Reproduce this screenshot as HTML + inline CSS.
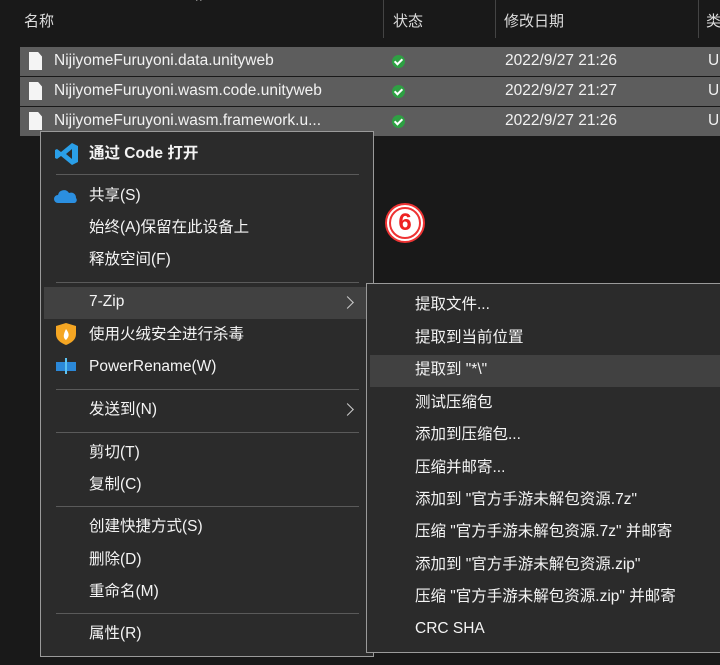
<!DOCTYPE html>
<html><head><meta charset="utf-8"><style>
*{margin:0;padding:0;box-sizing:border-box}
body{width:720px;height:665px;background:#191919;position:relative;overflow:hidden;font-family:"Liberation Sans","Noto Sans CJK SC",sans-serif;color:#fff;font-size:15px}
.a{position:absolute;white-space:nowrap}
.hd{color:#ddd;font-size:15px;top:10px}
.vs{position:absolute;top:0;width:1px;height:38px;background:#444}
.row{position:absolute;left:20px;width:700px;height:29px;background:#5d5d5d}
.row span{position:absolute;top:5px;color:#f2f2f2;font-size:15.5px}
.file{position:absolute;left:9px;top:5px;width:13px;height:18px;background:#f4f4f4;clip-path:polygon(0 0,70% 0,100% 25%,100% 100%,0 100%)}
.chk{position:absolute;left:372px;top:8px;width:13px;height:13px;border-radius:50%;background:#2ea043}
.chk:after{content:"";position:absolute;left:4px;top:2px;width:3px;height:6px;border:solid #fff;border-width:0 2px 2px 0;transform:rotate(45deg)}
.menu{position:absolute;background:#2b2b2b;border:1px solid #9a9a9a}
.it{position:absolute;font-size:15.5px;color:#f4f4f4;line-height:20px}
.sep{position:absolute;height:1px;background:#5a5a5a}
.hl{position:absolute;background:#414141}
.arr{position:absolute;width:9px;height:9px;border:solid #ccc;border-width:1.5px 1.5px 0 0;transform:rotate(45deg)}
</style></head><body>
<div class="a" style="left:196px;top:-6px;color:#aaa;font-size:12px">^</div>
<div class="a hd" style="left:24px">名称</div>
<div class="vs" style="left:383px"></div>
<div class="a hd" style="left:393px">状态</div>
<div class="vs" style="left:495px"></div>
<div class="a hd" style="left:504px">修改日期</div>
<div class="vs" style="left:698px"></div>
<div class="a hd" style="left:706px">类</div>

<div class="row" style="top:47px"><div class="file"></div><span style="left:34px">NijiyomeFuruyoni.data.unityweb</span><div class="chk"></div><span style="left:485px">2022/9/27 21:26</span><span style="left:688px">U</span></div>
<div class="row" style="top:77px"><div class="file"></div><span style="left:34px">NijiyomeFuruyoni.wasm.code.unityweb</span><div class="chk"></div><span style="left:485px">2022/9/27 21:27</span><span style="left:688px">U</span></div>
<div class="row" style="top:107px"><div class="file"></div><span style="left:34px">NijiyomeFuruyoni.wasm.framework.u...</span><div class="chk"></div><span style="left:485px">2022/9/27 21:26</span><span style="left:688px">U</span></div>

<div class="a" style="left:385px;top:203px;width:40px;height:40px;border-radius:50%;border:2px solid #e33;background:#fff"></div>
<div class="a" style="left:389px;top:207px;width:32px;height:32px;border-radius:50%;border:2px solid #e33;background:#fff;color:#e22;font-weight:bold;font-size:24px;text-align:center;line-height:28px">6</div>

<div class="menu" style="left:40px;top:131px;width:334px;height:526px">
 <svg class="a" style="left:14px;top:10px" width="24" height="24" viewBox="0 0 24 24"><path d="M17 1 L23 4 V20 L17 23 L6 14 L2 17 L0 16 V8 L2 7 L6 10 Z M17 7 L11 12 L17 17 Z" fill="#2a9fe8"/></svg>
 <div class="it" style="left:48px;top:12px;font-weight:bold">通过 Code 打开</div>
 <div class="sep" style="left:15px;top:42px;width:303px"></div>
 <svg class="a" style="left:13px;top:57px" width="24" height="14" viewBox="0 0 24 14"><path d="M4 14 A4 4 0 0 1 4 6 A6 6 0 0 1 15 4 A5 5 0 0 1 22 9 A3 3 0 0 1 20 14 Z" fill="#2b8fe0"/></svg>
 <div class="it" style="left:48px;top:54px">共享(S)</div>
 <div class="it" style="left:48px;top:86px">始终(A)保留在此设备上</div>
 <div class="it" style="left:48px;top:118px">释放空间(F)</div>
 <div class="sep" style="left:15px;top:150px;width:303px"></div>
 <div class="hl" style="left:3px;top:155px;width:322px;height:32px"></div>
 <div class="it" style="left:48px;top:160px">7-Zip</div>
 <div class="arr" style="left:302px;top:166px"></div>
 <svg class="a" style="left:15px;top:191px" width="20" height="22" viewBox="0 0 20 22"><path d="M10 0 L20 3 V11 C20 17 15 20 10 22 C5 20 0 17 0 11 V3 Z" fill="#f5a623"/><path d="M10 6 C13 10 14 13 10 17 C7 15 7 12 10 6 Z" fill="#fff"/></svg>
 <div class="it" style="left:48px;top:193px">使用火绒安全进行杀毒</div>
 <svg class="a" style="left:15px;top:225px" width="20" height="18" viewBox="0 0 20 18"><rect x="0" y="5" width="9" height="9" fill="#2b88d8"/><rect x="11" y="5" width="9" height="9" fill="#2b88d8"/><rect x="9" y="1" width="2" height="16" fill="#5cc2f2"/></svg>
 <div class="it" style="left:48px;top:225px">PowerRename(W)</div>
 <div class="sep" style="left:15px;top:257px;width:303px"></div>
 <div class="it" style="left:48px;top:268px">发送到(N)</div>
 <div class="arr" style="left:302px;top:273px"></div>
 <div class="sep" style="left:15px;top:300px;width:303px"></div>
 <div class="it" style="left:48px;top:311px">剪切(T)</div>
 <div class="it" style="left:48px;top:343px">复制(C)</div>
 <div class="sep" style="left:15px;top:374px;width:303px"></div>
 <div class="it" style="left:48px;top:385px">创建快捷方式(S)</div>
 <div class="it" style="left:48px;top:418px">删除(D)</div>
 <div class="it" style="left:48px;top:450px">重命名(M)</div>
 <div class="sep" style="left:15px;top:481px;width:303px"></div>
 <div class="it" style="left:48px;top:492px">属性(R)</div>
</div>

<div class="menu" style="left:366px;top:283px;width:360px;height:370px">
 <div class="hl" style="left:3px;top:71px;width:360px;height:32px"></div>
 <div class="it" style="left:48px;top:11px">提取文件...</div>
 <div class="it" style="left:48px;top:44px">提取到当前位置</div>
 <div class="it" style="left:48px;top:76px">提取到 "*\"</div>
 <div class="it" style="left:48px;top:109px">测试压缩包</div>
 <div class="it" style="left:48px;top:141px">添加到压缩包...</div>
 <div class="it" style="left:48px;top:174px">压缩并邮寄...</div>
 <div class="it" style="left:48px;top:206px">添加到 "官方手游未解包资源.7z"</div>
 <div class="it" style="left:48px;top:238px">压缩 "官方手游未解包资源.7z" 并邮寄</div>
 <div class="it" style="left:48px;top:271px">添加到 "官方手游未解包资源.zip"</div>
 <div class="it" style="left:48px;top:303px">压缩 "官方手游未解包资源.zip" 并邮寄</div>
 <div class="it" style="left:48px;top:335px">CRC SHA</div>
</div>
</body></html>
